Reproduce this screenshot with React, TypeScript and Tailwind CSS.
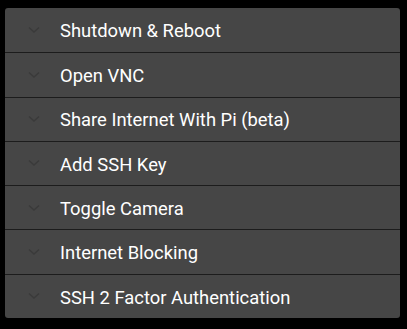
const items = [
  "Shutdown & Reboot",
  "Open VNC",
  "Share Internet With Pi (beta)",
  "Add SSH Key",
  "Toggle Camera",
  "Internet Blocking",
  "SSH 2 Factor Authentication",
];

function Chevron() {
  return (
    <svg width="12" height="8" viewBox="0 0 12 8" className="text-[#3a3a3a]">
      <path d="M1 1.5 L6 6 L11 1.5" fill="none" stroke="currentColor" strokeWidth="1.4" />
    </svg>
  );
}

export default function App() {
  return (
    <div className="min-h-[329px] bg-black pt-[8px] px-[5px] pr-[7px]" style={{ fontFamily: "Roboto, sans-serif" }}>
      <div className="flex flex-col">
        {items.map((label, i) => (
          <div
            key={label}
            className={`flex h-[44.29px] items-center bg-[#464646] shadow-[1px_1px_1px_rgba(0,0,0,0.6)] ${
              i > 0 ? "border-t-[1.5px] border-[#1c1c1c]" : "rounded-t-[3px]"
            } ${i === items.length - 1 ? "rounded-b-[3px] h-[43.29px]" : ""}`}
          >
            <div className="flex w-[55px] justify-center pl-[3px]">
              <Chevron />
            </div>
            <span className="pt-[2px] text-[18.4px] font-normal text-white">{label}</span>
          </div>
        ))}
      </div>
    </div>
  );
}
